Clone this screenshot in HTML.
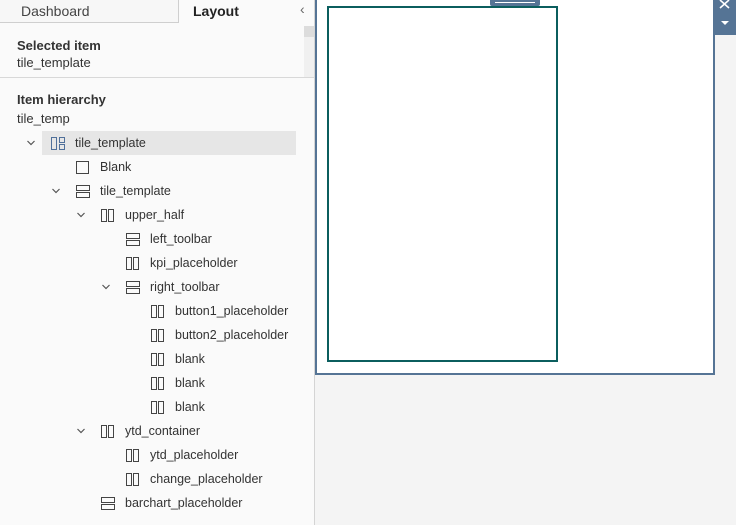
<!DOCTYPE html>
<html><head><style>
body{margin:0;width:736px;height:525px;overflow:hidden;background:#f4f4f4;font-family:"Liberation Sans",sans-serif;color:#333;position:relative}
#left{position:absolute;left:0;top:0;width:314px;height:525px;background:#fafafa;border-right:1px solid #d4d4d4}
.tab{position:absolute;top:0;height:22px;font-size:14px;line-height:22px}
.t{position:absolute;font-size:13px;white-space:nowrap}
.b{font-weight:bold}
.row{position:absolute;height:24px;line-height:24px;font-size:12.5px;white-space:nowrap}
svg{position:absolute}
</style></head><body>
<div id="left">
<div class="tab" style="left:0;width:178px;border-bottom:1px solid #cfcfcf;border-right:1px solid #cfcfcf;background:#f7f7f7"><span style="margin-left:21px;color:#444">Dashboard</span></div>
<div class="tab b" style="left:193px;color:#222">Layout</div>
<div class="t" style="left:300px;top:1px;color:#666;font-size:14px">‹</div>
<div style="position:absolute;left:304px;top:26px;width:10px;height:51px;background:#f0f0f0"></div>
<div style="position:absolute;left:304px;top:26px;width:10px;height:11px;background:#dcdcdc"></div>
<div class="t b" style="left:17px;top:38px">Selected item</div>
<div class="t" style="left:17px;top:55px">tile_template</div>
<div style="position:absolute;left:0;top:77px;width:314px;height:1px;background:#d8d8d8"></div>
<div class="t b" style="left:17px;top:92px">Item hierarchy</div>
<div class="t" style="left:17px;top:111px">tile_temp</div>
<div style="position:absolute;left:42px;top:131px;width:254px;height:24px;background:#e6e6e6"></div>
<div id="tree"></div>
</div>
<div style="position:absolute;left:315px;top:-2px;width:396px;height:373px;background:#fff;border:2px solid #557495"></div>
<div style="position:absolute;left:327px;top:6px;width:227px;height:352px;border:2px solid #0b5e5e"></div>
<div style="position:absolute;left:490px;top:0;width:50px;height:6px;background:#557495;border-radius:0 0 2px 2px"><div style="position:absolute;left:5px;top:2px;width:40px;height:1px;background:#fff"></div></div>
<div style="position:absolute;left:714px;top:0;width:22px;height:35px;background:#557495">
<svg width="22" height="35"><path d="M6 0L15 8M15 0L6 8" stroke="#fff" stroke-width="1.6"/><path d="M7 21L15 21L11 25Z" fill="#fff"/></svg></div>
<script>
var rows=[[0,'c','v','tile_template'],[1,'n','b','Blank'],[1,'c','h','tile_template'],[2,'c','v','upper_half'],[3,'n','h','left_toolbar'],[3,'n','v','kpi_placeholder'],[3,'c','h','right_toolbar'],[4,'n','v','button1_placeholder'],[4,'n','v','button2_placeholder'],[4,'n','v','blank'],[4,'n','v','blank'],[4,'n','v','blank'],[2,'c','v','ytd_container'],[3,'n','v','ytd_placeholder'],[3,'n','v','change_placeholder'],[2,'n','h','barchart_placeholder']];
var h='';rows.forEach(function(r,i){var y=131+i*24,ix=51+r[0]*25;if(i==0)ix=51;
if(r[1]=='c')h+='<svg style="left:'+(ix-25)+'px;top:'+(y+8)+'px" width="10" height="8"><path d="M1.5 2L5 5.5L8.5 2" fill="none" stroke="#555" stroke-width="1.2"/></svg>';
var p;if(i==0)p='<rect x="0.5" y="0.5" width="5" height="12" fill="none" stroke="#50709a"/><rect x="8.5" y="0.5" width="5" height="5" fill="none" stroke="#50709a"/><rect x="8.5" y="7.5" width="5" height="5" fill="none" stroke="#50709a"/>';
else if(r[2]=='b')p='<rect x="0.5" y="0.5" width="12" height="12" fill="none" stroke="#444"/>';
else if(r[2]=='h')p='<rect x="0.5" y="0.5" width="13" height="5" fill="none" stroke="#444"/><rect x="0.5" y="7.5" width="13" height="5" fill="none" stroke="#444"/>';
else p='<rect x="0.5" y="0.5" width="5" height="12" fill="none" stroke="#444"/><rect x="7.5" y="0.5" width="5" height="12" fill="none" stroke="#444"/>';
h+='<svg style="left:'+ix+'px;top:'+(y+6)+'px" width="14" height="13">'+p+'</svg>';
h+='<div class="row" style="left:'+(ix+24)+'px;top:'+y+'px;color:#333">'+r[3]+'</div>';});
document.getElementById('tree').innerHTML=h;
</script>
</body></html>
